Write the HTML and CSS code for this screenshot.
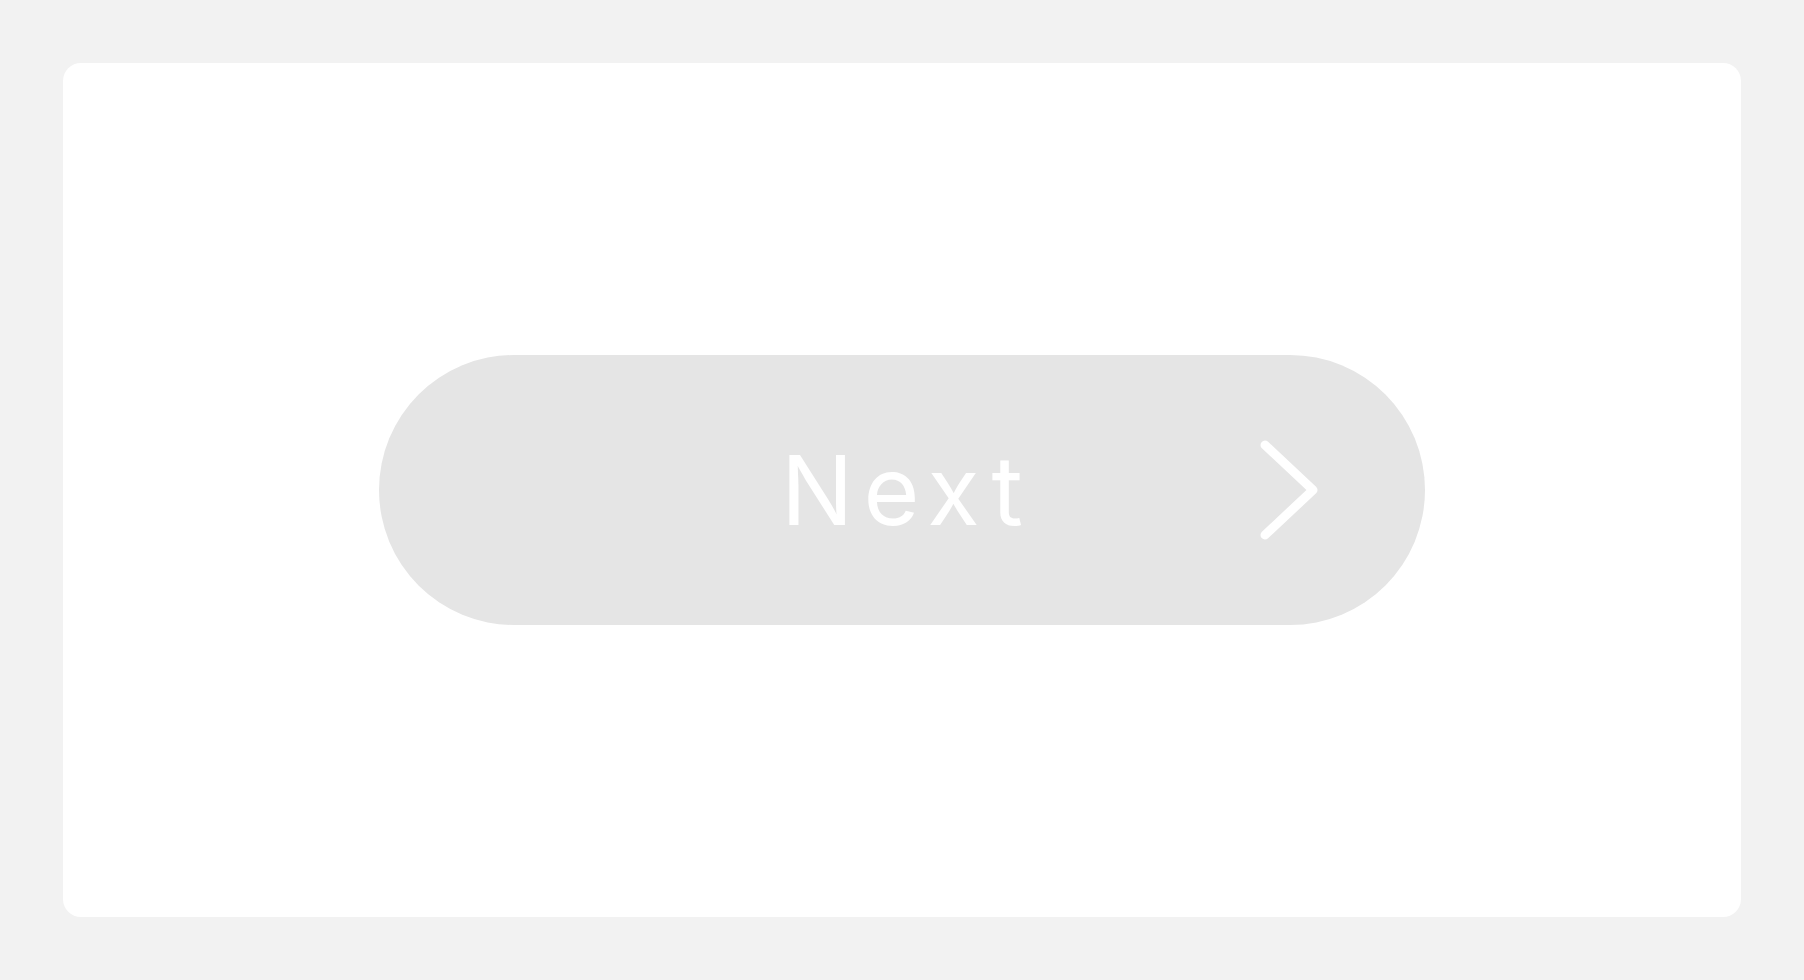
FILE: index.html
```html
<html lang="en">

<head>
    <meta charset="UTF-8">
    <meta name="viewport" content="width=device-width, initial-scale=1.0">
    <title>Next</title>
    <link rel="stylesheet" href="styles.css">
</head>

<body>
    <div class="card">
        <button class="next-button" type="button">
            <span class="spacer"></span>
            <span class="label">Next</span>
            <span class="arrow">
                <svg width="64" height="100" viewBox="0 0 64 100">
                    <path d="M8 5 L56 50 L8 95" fill="none" stroke="#fff" stroke-width="9"
                        stroke-linecap="round" stroke-linejoin="round" />
                </svg>
            </span>
        </button>
    </div>
</body>

</html>
```

FILE: styles.css
```css
html,
body {
    width: 100%;
    height: 100%;
    padding: 0;
    margin: 0;
    background-color: #f2f2f2;
}

body {
    box-sizing: border-box;
    padding: 63px;
}

.card {
    height: 100%;
    background-color: #fff;
    border-radius: 18px;
    display: flex;
    align-items: center;
    justify-content: center;
}

.next-button {
    width: 1046px;
    height: 270px;
    border: none;
    padding: 0;
    border-radius: 135px;
    background-color: #e5e5e5;
    display: grid;
    grid-template-columns: 1fr auto 1fr;
    align-items: center;
    cursor: pointer;
}

/* letter-spacing leaves a gap after the last letter, so pad the left side too */
.label {
    font-family: Inter, "Noto Sans", sans-serif;
    font-size: 96px;
    font-weight: 400;
    letter-spacing: 10px;
    padding-left: 10px;
    color: #fff;
    line-height: 1;
}

.arrow {
    justify-self: end;
    padding-right: 104px;
    display: flex;
}
```
